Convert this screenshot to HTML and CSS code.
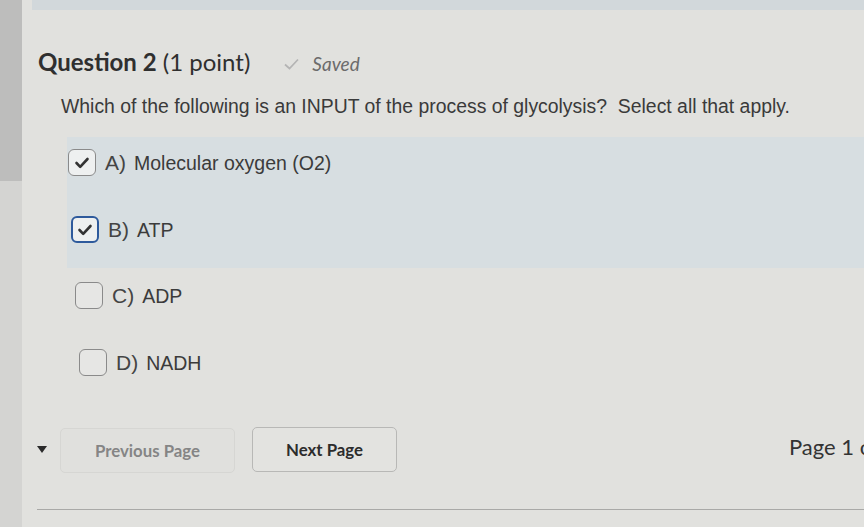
FILE: index.html
```html
<!DOCTYPE html>
<html>
<head>
<meta charset="utf-8">
<link rel="stylesheet" href="styles.css">
</head>
<body>
<div class="rail"><div class="rail-top"></div><div class="rail-bottom"></div></div>
<div class="main">
  <div class="topband"></div>
  <div class="question">
    <h2 class="q-title"><span class="q-name"><b>Question 2</b> (1 point)</span><span class="saved"><svg class="saved-check" width="17" height="14" viewBox="0 0 17 14"><path d="M2 7.5 L6.5 11.5 L15 2.5" fill="none" stroke="#b4b4b4" stroke-width="1.7"/></svg><i>Saved</i></span></h2>
    <p class="q-text">Which of the following is an INPUT of the process of glycolysis?&nbsp; Select all that apply.</p>
    <div class="options">
      <div class="selected-group">
        <label class="opt opt-a"><span class="box checked"><svg width="16" height="14" viewBox="0 0 16 14"><path d="M2.5 7 L6.2 10.8 L13.5 3" fill="none" stroke="#333" stroke-width="2.6" stroke-linecap="round" stroke-linejoin="round"/></svg></span><span class="letter">A)</span>Molecular oxygen (O2)</label>
        <label class="opt opt-b"><span class="box checked focus"><svg width="16" height="14" viewBox="0 0 16 14"><path d="M2.5 7 L6.2 10.8 L13.5 3" fill="none" stroke="#333" stroke-width="2.6" stroke-linecap="round" stroke-linejoin="round"/></svg></span><span class="letter">B)</span>ATP</label>
      </div>
      <label class="opt opt-c"><span class="box"></span><span class="letter">C)</span>ADP</label>
      <label class="opt opt-d"><span class="box"></span><span class="letter">D)</span>NADH</label>
    </div>
  </div>
  <div class="nav">
    <span class="caret"></span>
    <button class="btn btn-prev">Previous Page</button>
    <button class="btn btn-next">Next Page</button>
    <span class="page">Page 1 of 1</span>
  </div>
  <div class="rule"></div>
</div>
</body>
</html>
```
FILE: styles.css
```css
html, body {
  margin: 0;
  padding: 0;
  height: 527px;
  overflow: hidden;
}
body {
  display: flex;
  background: #e1e1de;
  font-family: "Liberation Sans", Arial, sans-serif;
  color: #3a3a3a;
}
.rail {
  width: 22px;
  flex: none;
  display: flex;
  flex-direction: column;
}
.rail-top {
  height: 181px;
  background: #bdbdbc;
}
.rail-bottom {
  flex: 1;
  background: #d4d4d2;
}
.main {
  flex: 1;
  min-width: 0;
  display: flex;
  flex-direction: column;
  overflow: hidden;
}
.topband {
  height: 10px;
  margin-left: 10px;
  background: #d2d8db;
}
.question {
  padding-left: 16px;
}
.q-title {
  margin: 38px 0 0;
  font-family: Lato, "Liberation Sans", sans-serif;
  font-weight: 400;
  font-size: 24px;
  line-height: 28px;
  color: #2f2f2f;
  display: flex;
  align-items: baseline;
}
.q-name {
  white-space: nowrap;
}
.q-name b {
  font-weight: 700;
}
.saved {
  margin-left: 33px;
  display: inline-flex;
  align-items: center;
  gap: 12px;
  font-size: 19px;
  color: #6b6b6b;
}
.q-text {
  margin: 16px 0 0 23px;
  font-size: 19.4px;
  line-height: 24px;
  color: #3a3a3a;
  white-space: nowrap;
}
.options {
  margin-top: 19px;
  display: flex;
  flex-direction: column;
}
.selected-group {
  background: #d7dee1;
  margin-left: 29px;
  display: flex;
  flex-direction: column;
}
.opt {
  height: 66px;
  box-sizing: border-box;
  padding-top: 11px;
  display: flex;
  align-items: flex-start;
  font-size: 19.5px;
  line-height: 28px;
  color: #3b3b3b;
}
.opt-a { padding-left: 1px; height: 66px; padding-top: 12px; }
.opt-b { padding-left: 4px; height: 65px; padding-top: 13px; }
.opt-c { padding-left: 37px; padding-top: 14px; }
.opt-d { padding-left: 41px; padding-top: 15px; }
.letter {
  font-size: 21px;
  margin-right: 8px;
  color: #444;
}
.box {
  width: 28px;
  height: 27px;
  box-sizing: border-box;
  border: 1px solid #8a8a8a;
  border-radius: 6px;
  background: #e6e6e4;
  margin-right: 9px;
  display: flex;
  align-items: center;
  justify-content: center;
  flex: none;
}
.box.checked {
  background: #eef0f0;
}
.box.focus {
  border: 2px solid #2e5a9c;
  background: #eef0f0;
}
.nav {
  margin-top: 26px;
  display: flex;
  align-items: center;
  height: 46px;
}
.caret {
  flex: none;
  width: 0;
  height: 0;
  border-left: 5px solid transparent;
  border-right: 5px solid transparent;
  border-top: 7px solid #2a2a2a;
  margin-left: 15px;
  margin-right: 13px;
}
.btn {
  flex: none;
  font-family: Lato, "Liberation Sans", sans-serif;
  font-size: 16.8px;
  font-weight: 700;
  height: 45px;
  border-radius: 5px;
  box-sizing: border-box;
  padding: 0;
}
.btn-prev {
  width: 175px;
  background: #e0e0dd;
  border: 1px solid #d6d6d3;
  color: #858585;
  margin-top: 2px;
}
.btn-next {
  width: 145px;
  margin-left: 17px;
  background: #e3e3e0;
  border: 1px solid #b8b8b6;
  color: #2c2c2c;
}
.page {
  flex: none;
  margin-left: 392px;
  font-family: Lato, "Liberation Sans", sans-serif;
  font-size: 22px;
  color: #333;
  white-space: nowrap;
  position: relative;
  top: -3px;
}
.rule {
  margin-top: 37px;
  margin-left: 15px;
  height: 1px;
  background: #a9a9a7;
}
```
